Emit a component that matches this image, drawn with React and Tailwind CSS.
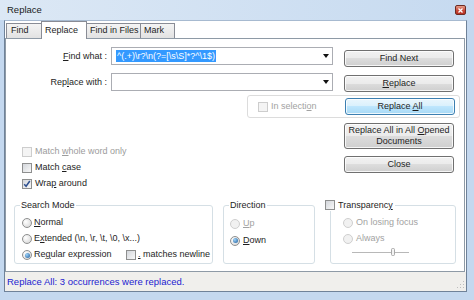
import React from "react";

const U = ({children}) => <span className="underline decoration-1 underline-offset-[1px]">{children}</span>;

const Check = ({checked, disabled}) => (
    <span
        className={`inline-flex h-[10px] w-[10px] shrink-0 items-center justify-center border ${disabled ? "border-[#cdcdcd] bg-[#f4f4f4]" : "border-[#8e8f8f] bg-[linear-gradient(135deg,#d3d6db,#f8f8f8)]"}`}>
        {checked && (
            <svg width="8" height="8" viewBox="0 0 8 8">
                <path d="M1.2 4.2l1.9 2.1L6.8 1" stroke="#2d4f8f" strokeWidth="1.5" fill="none"/>
            </svg>
        )}
    </span>
);

const Radio = ({checked, disabled}) => (
    <span
        className={`inline-flex h-[10px] w-[10px] shrink-0 items-center justify-center rounded-full border ${disabled ? "border-[#cfcfcf] bg-[#f1f1f1]" : "border-[#8e8f8f] bg-[radial-gradient(circle_at_35%_35%,#ffffff,#d2d2d2)]"}`}>
        {checked &&
            <span className="h-[5px] w-[5px] rounded-full bg-[radial-gradient(circle_at_35%_35%,#9fd3f8,#1b5a9a)]"/>}
    </span>
);

const Btn = ({children, primary, className = ""}) => (
    <div
        className={`flex w-[110px] items-center justify-center rounded-[3px] border text-center leading-[11px] shadow-[inset_0_0_0_1px_rgba(255,255,255,0.8)] ${primary ? "border-[#3c7fb1] bg-[linear-gradient(#eaf6fd,#d9f0fc_50%,#bee6fd_50%,#a7d9f5)]" : "border-[#707070] bg-[linear-gradient(#f2f2f2,#ebebeb_50%,#dddddd_50%,#cfcfcf)]"} ${className}`}>
        {children}
    </div>
);

const Arrow = () => (
    <svg width="6" height="4" viewBox="0 0 6 4" className="ml-auto mr-[3px] shrink-0">
        <path d="M0 0h6L3 4z" fill="#111"/>
    </svg>
);

const App = () => {
    return (
        <div
            className="flex h-[300px] w-[474px] flex-col overflow-hidden bg-[#c4d8ef] font-['Liberation_Sans',Arial,sans-serif] text-[9px] text-[#1e1e1e]">
            {/* title bar */}
            <div
                className="flex h-[20px] shrink-0 items-center justify-between bg-[linear-gradient(to_right,#dce8f5,#c6daf0)] pl-[7px] pr-[8px]">
                <span className="text-[9.5px] text-[#1a1a1a]">Replace</span>
                <div
                    className="flex h-[10px] w-[11px] items-center justify-center rounded-[2px] border border-[#6e2b22] bg-[linear-gradient(#e6a08c,#c9493a_55%,#b83224)]">
                    <svg width="5" height="5" viewBox="0 0 5 5">
                        <path d="M0.5 0.5l4 4M4.5 0.5l-4 4" stroke="#fff" strokeWidth="1.3"/>
                    </svg>
                </div>
            </div>

            <div className="mb-[8px] ml-[4px] mr-[7px] flex flex-1 flex-col border border-[#6f8299] border-t-[#a7bad0] bg-white">
                {/* tabs */}
                <div className="flex h-[17px] shrink-0 items-end pl-[1px]">
                    <div
                        className="flex h-[15px] w-[36px] items-center border border-b-0 border-[#898c95] bg-[linear-gradient(#f4f4f4,#e2e2e2)] pl-[4px]">Find
                    </div>
                    <div
                        className="relative z-10 -mb-px -ml-px flex h-[18px] w-[46px] items-start border border-b-0 border-[#898c95] bg-white pl-[3px] pt-[2px]">Replace
                    </div>
                    <div
                        className="-ml-px flex h-[15px] w-[55px] items-center border border-b-0 border-[#898c95] bg-[linear-gradient(#f4f4f4,#e2e2e2)] pl-[3px]">Find in Files
                    </div>
                    <div
                        className="-ml-px flex h-[15px] w-[35px] items-center border border-b-0 border-[#898c95] bg-[linear-gradient(#f4f4f4,#e2e2e2)] pl-[3px]">Mark
                    </div>
                </div>

                {/* panel */}
                <div className="mr-[1px] flex flex-1 flex-col border border-[#8e9aa6] bg-white">
                    <div className="mt-[8px] flex items-start">
                        <div className="w-[101px] text-right leading-[18px]"><U>F</U>ind what :</div>
                        <div className="ml-[4px] flex h-[18px] w-[222px] items-center border border-[#abadb3] pl-[4px]">
                            <span className="bg-[#3399ff] px-[1px] leading-[12px] text-white">^(.+)\r?\n(?=[\s\S]*?^\1$)</span>
                            <Arrow/>
                        </div>
                        <Btn className="ml-[11px] mt-[3px] h-[17px]">Find Next</Btn>
                    </div>

                    <div className="mt-[6px] flex items-start">
                        <div className="w-[101px] text-right leading-[18px]">Rep<U>l</U>ace with :</div>
                        <div className="ml-[4px] flex h-[18px] w-[222px] items-center border border-[#abadb3] pl-[4px]">
                            <Arrow/>
                        </div>
                        <Btn className="ml-[11px] mt-[2px] h-[17px]"><span><U>R</U>eplace</span></Btn>
                    </div>

                    <div
                        className="ml-[241px] mt-[3px] flex h-[23px] w-[213px] items-center justify-between rounded-[3px] border border-[#dcdcdc] pl-[10px] pr-[4px]">
                        <div className="flex items-center gap-[3px] text-[#a2a2a2]">
                            <Check disabled/>
                            <span>In selecti<U>o</U>n</span>
                        </div>
                        <Btn primary className="h-[17px]"><span>Replace <U>A</U>ll</span></Btn>
                    </div>

                    <div className="flex items-start">
                        <div className="ml-[16px] mt-[26px] flex flex-col">
                            <div className="flex h-[16px] items-center gap-[3px] text-[#9c9c9c]">
                                <Check disabled/>
                                <span>Match <U>w</U>hole word only</span>
                            </div>
                            <div className="flex h-[16px] items-center gap-[3px]">
                                <Check/>
                                <span>Match <U>c</U>ase</span>
                            </div>
                            <div className="flex h-[16px] items-center gap-[3px]">
                                <Check checked/>
                                <span>Wra<U>p</U> around</span>
                            </div>
                        </div>
                        <div className="ml-auto mr-[10px] mt-[5px] flex w-[110px] flex-col">
                            <Btn className="h-[26px]"><span>Replace All in All <U>O</U>pened<br/>Documents</span></Btn>
                            <Btn className="mt-[7px] h-[17px]">Close</Btn>
                        </div>
                    </div>

                    <div className="mt-[7px] flex items-start">
                        <fieldset className="ml-[8px] h-[65px] w-[199px] rounded-[3px] border border-[#d5dfe5] pl-[7px] pt-[4px]">
                            <legend className="-ml-[2px] px-[1px] leading-[12px]">Search Mode</legend>
                            <div className="flex h-[16px] items-center gap-[2px]">
                                <Radio/>
                                <span><U>N</U>ormal</span>
                            </div>
                            <div className="flex h-[16px] items-center gap-[2px]">
                                <Radio/>
                                <span>E<U>x</U>tended (\n, \r, \t, \0, \x...)</span>
                            </div>
                            <div className="flex h-[16px] items-center gap-[2px]">
                                <Radio checked/>
                                <span className="w-[90px]">Re<U>g</U>ular expression</span>
                                <Check/>
                                <span><U>.</U> matches newline</span>
                            </div>
                        </fieldset>

                        <fieldset className="ml-[10px] h-[65px] w-[92px] rounded-[3px] border border-[#d5dfe5] pl-[6px] pt-[4px]">
                            <legend className="-ml-[1px] px-[1px] leading-[12px]">Direction</legend>
                            <div className="flex h-[17px] items-center gap-[3px] text-[#a2a2a2]">
                                <Radio disabled/>
                                <span><U>U</U>p</span>
                            </div>
                            <div className="flex h-[17px] items-center gap-[3px]">
                                <Radio checked/>
                                <span><U>D</U>own</span>
                            </div>
                        </fieldset>

                        <fieldset className="ml-[15px] h-[65px] w-[126px] rounded-[3px] border border-[#d5dfe5] pl-[12px] pt-[4px]">
                            <legend className="-ml-[18px] flex items-center gap-[3px] pr-[2px] leading-[12px]">
                                <Check/>
                                <span>Transparenc<U>y</U></span>
                            </legend>
                            <div className="flex h-[16px] items-center gap-[3px] text-[#a2a2a2]">
                                <Radio disabled/>
                                <span>On losing focus</span>
                            </div>
                            <div className="flex h-[16px] items-center gap-[3px] text-[#a2a2a2]">
                                <Radio disabled/>
                                <span>Always</span>
                            </div>
                            <svg width="58" height="10" viewBox="0 0 58 10" className="ml-[9px]">
                                <path d="M0 5.5h57" stroke="#b8b8b8" strokeWidth="1"/>
                                <rect x="39.5" y="1.5" width="3" height="7" rx="1" fill="#f4f4f4" stroke="#a8a8a8"/>
                            </svg>
                        </fieldset>
                    </div>
                </div>

                {/* status bar */}
                <div className="flex h-[19px] shrink-0 items-center bg-[#f0efec] pl-[2px] pt-[2px] text-[9.5px] text-[#1c1cd0]">
                    <span>Replace All: 3 occurrences were replaced.</span>
                    <svg width="8" height="8" viewBox="0 0 8 8" className="ml-auto mr-[1px] mt-[4px]">
                        <g fill="#bdbdbd">
                            <rect x="6" y="0" width="1" height="1"/>
                            <rect x="3" y="3" width="1" height="1"/>
                            <rect x="6" y="3" width="1" height="1"/>
                            <rect x="0" y="6" width="1" height="1"/>
                            <rect x="3" y="6" width="1" height="1"/>
                            <rect x="6" y="6" width="1" height="1"/>
                        </g>
                    </svg>
                </div>
            </div>
        </div>
    );
};

export default App;
